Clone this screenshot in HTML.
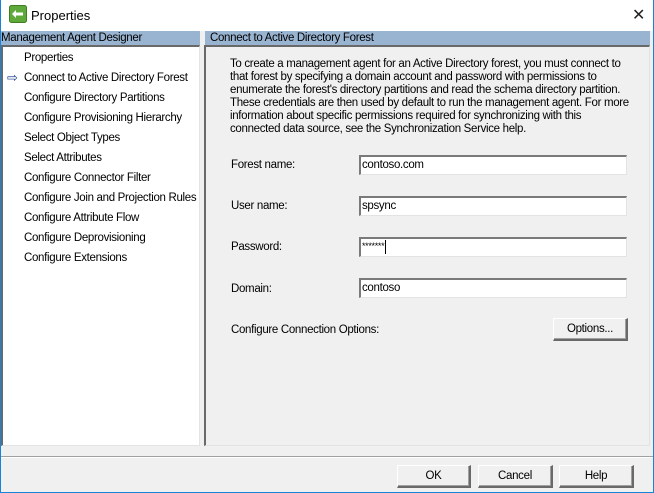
<!DOCTYPE html>
<html><head><meta charset="utf-8"><style>
*{margin:0;padding:0;box-sizing:border-box}
body{width:654px;height:493px;overflow:hidden;background:#f0f0f0;font-family:"Liberation Sans",sans-serif;font-size:11.5px;letter-spacing:-0.32px;color:#000;position:relative}
.abs{position:absolute}
.win{left:0;top:0;width:654px;height:493px;border:1px solid #1883d7;border-top:none}
.title{left:0;top:0;width:654px;height:31px;background:#fff}
.hdr{background:#99b4d1;height:14px;top:31px;line-height:15px;white-space:nowrap;overflow:hidden}
.list{left:1px;top:45px;width:199px;height:401px;background:#fff;border-left:2px solid #696969;border-top:2px solid #696969;border-right:1px solid #e3e3e3;border-bottom:1px solid #e3e3e3}
.item{position:absolute;left:24px;white-space:nowrap}
.panel{left:204px;top:45px;width:446px;height:401px;border-left:2px solid #696969;border-top:2px solid #696969;border-right:1px solid #e3e3e3;border-bottom:1px solid #e3e3e3}
.p{left:230px;top:58px;width:410px;line-height:13px}
.lbl{left:231px;white-space:nowrap}
.inp{left:359px;width:268px;height:20px;background:#fff;border:1px solid #e3e3e3;border-left:2px solid #7a7a7a;border-top:2px solid #7a7a7a;padding-left:1px;line-height:17px;white-space:nowrap;font-size:11.5px}
.btn{height:23px;background:#f0f0f0;border:1px solid #fff;border-right:2px solid #696969;border-bottom:2px solid #696969;box-shadow:inset -1px -1px 0 #a0a0a0;text-align:center;line-height:21px;font-size:11.5px}
</style></head><body>
<div class="abs title">
<svg class="abs" style="left:9px;top:5px" width="18" height="18" viewBox="0 0 18 18"><rect x="0.5" y="0.5" width="17" height="17" rx="2" fill="#5fa83a" stroke="#3f7f22"/><path d="M3 9 L7 5 L7 7.5 L14 7.5 L14 10.5 L7 10.5 L7 13 Z" fill="#fff"/></svg>
<div class="abs" style="left:31px;top:8px;font-size:13px;letter-spacing:0">Properties</div>
<div class="abs" style="left:632px;top:5px;font-size:16px;font-weight:300;color:#222">✕</div>
</div>
<div class="abs hdr" style="left:1px;width:199px">Management Agent Designer</div>
<div class="abs hdr" style="left:205px;width:445px;padding-left:5px">Connect to Active Directory Forest</div>
<div class="abs list"></div>
<div class="abs" style="left:0;top:0">
<div class="item" style="top:52px">Properties</div>
<div class="abs" style="left:7px;top:70px;font-size:13px;color:#1a3d8a">⇨</div>
<div class="item" style="top:72px">Connect to Active Directory Forest</div>
<div class="item" style="top:92px">Configure Directory Partitions</div>
<div class="item" style="top:112px">Configure Provisioning Hierarchy</div>
<div class="item" style="top:132px">Select Object Types</div>
<div class="item" style="top:152px">Select Attributes</div>
<div class="item" style="top:172px">Configure Connector Filter</div>
<div class="item" style="top:192px">Configure Join and Projection Rules</div>
<div class="item" style="top:212px">Configure Attribute Flow</div>
<div class="item" style="top:232px">Configure Deprovisioning</div>
<div class="item" style="top:252px">Configure Extensions</div>
</div>
<div class="abs panel"></div>
<div class="abs p">To create a management agent for an Active Directory forest, you must connect to<br>that forest by specifying a domain account and password with permissions to<br>enumerate the forest's directory partitions and read the schema directory partition.<br>These credentials are then used by default to run the management agent. For more<br>information about specific permissions required for synchronizing with this<br>connected data source, see the Synchronization Service help.</div>
<div class="abs lbl" style="top:159px">Forest name:</div>
<div class="abs inp" style="top:155px">contoso.com</div>
<div class="abs lbl" style="top:200px">User name:</div>
<div class="abs inp" style="top:196px">spsync</div>
<div class="abs lbl" style="top:241px">Password:</div>
<div class="abs inp" style="top:237px;font-size:9px;line-height:14px">*******<span style="display:inline-block;width:1px;height:14px;background:#000;vertical-align:middle;margin-left:1px"></span></div>
<div class="abs lbl" style="top:283px">Domain:</div>
<div class="abs inp" style="top:278px">contoso</div>
<div class="abs lbl" style="top:324px">Configure Connection Options:</div>
<div class="abs btn" style="left:553px;top:318px;width:75px">Options...</div>
<div class="abs" style="left:1px;top:456px;width:652px;height:1px;background:#a0a0a0"></div>
<div class="abs" style="left:1px;top:457px;width:652px;height:1px;background:#fff"></div>
<div class="abs btn" style="left:397px;top:465px;width:74px">OK</div>
<div class="abs btn" style="left:478px;top:465px;width:75px">Cancel</div>
<div class="abs btn" style="left:559px;top:465px;width:75px">Help</div>
<div class="abs win"></div>
</body></html>
